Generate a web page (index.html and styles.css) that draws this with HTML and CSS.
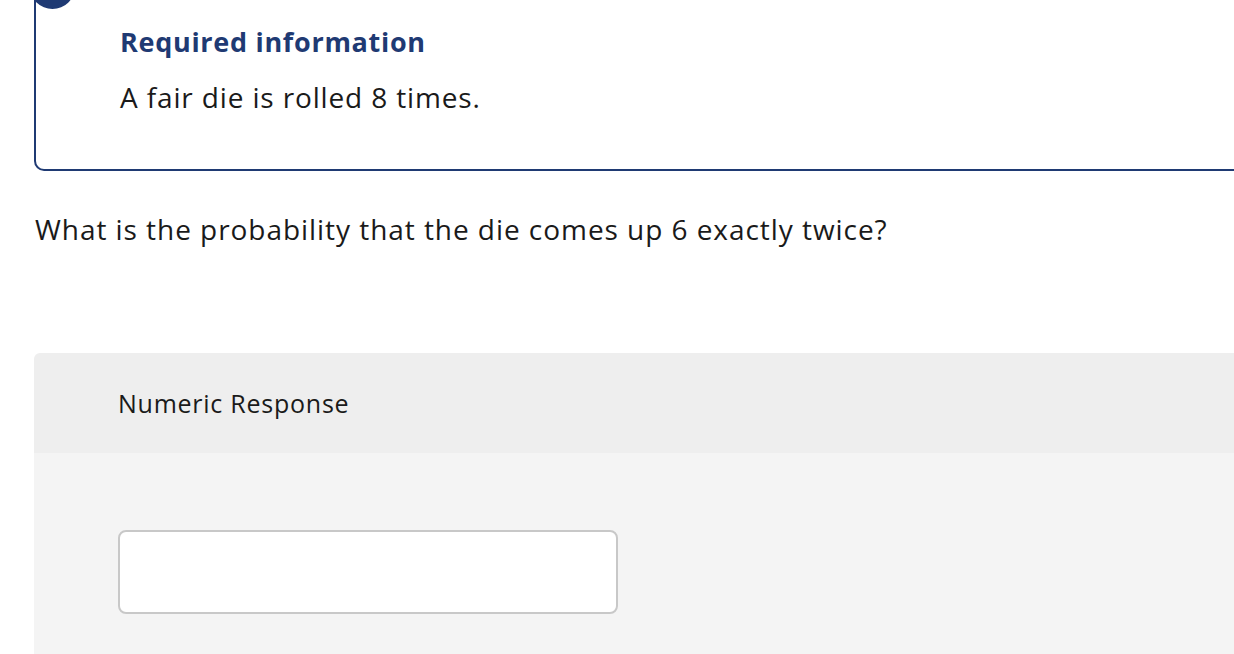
FILE: index.html
```html
<!DOCTYPE html>
<html>
<head>
<meta charset="utf-8">
<link rel="stylesheet" href="styles.css">
</head>
<body>
<div class="page">
  <div class="info">
    <div class="badge"></div>
    <h2 class="info-title">Required information</h2>
    <p class="info-text">A fair die is rolled 8 times.</p>
  </div>
  <p class="question">What is the probability that the die comes up 6 exactly twice?</p>
  <div class="response">
    <div class="response-head">Numeric Response</div>
    <div class="response-body">
      <div class="answer-input"></div>
    </div>
  </div>
</div>
</body>
</html>
```

FILE: styles.css
```css
html, body {
  margin: 0;
  padding: 0;
  background: #fff;
  overflow: hidden;
}
body {
  font-family: "Open Sans", "Lato", sans-serif;
  font-variant-ligatures: none;
  color: #1a1a1a;
  width: 1234px;
  height: 654px;
}
.page {
  padding-left: 34px;
}
.info {
  position: relative;
  border-left: 2px solid #1f3a73;
  border-bottom: 2px solid #1f3a73;
  border-bottom-left-radius: 10px;
  height: 171px;
  box-sizing: border-box;
  padding: 24px 0 0 84px;
}
.badge {
  position: absolute;
  left: -6px;
  top: -36px;
  width: 45px;
  height: 45px;
  border-radius: 50%;
  background: #1f3a73;
}
.info-title {
  margin: 0;
  font-size: 27px;
  font-weight: 700;
  letter-spacing: 0.7px;
  color: #1f3a73;
  line-height: 36px;
}
.info-text {
  margin: 19px 0 0;
  font-size: 28px;
  letter-spacing: 0.86px;
  line-height: 36px;
}
.question {
  margin: 40px 0 0 1px;
  font-size: 28px;
  letter-spacing: 0.95px;
  line-height: 36px;
}
.response {
  margin-top: 106px;
  border-top-left-radius: 6px;
  overflow: hidden;
}
.response-head {
  background: #eeeeee;
  height: 100px;
  display: flex;
  align-items: center;
  padding-left: 84px;
  font-size: 25px;
  letter-spacing: 0.75px;
}
.response-body {
  background: #f4f4f4;
  padding: 77px 0 0 84px;
  height: 201px;
  box-sizing: border-box;
}
.answer-input {
  width: 496px;
  height: 80px;
  border: 2px solid #c8c8c8;
  border-radius: 8px;
  background: #fff;
}
```
